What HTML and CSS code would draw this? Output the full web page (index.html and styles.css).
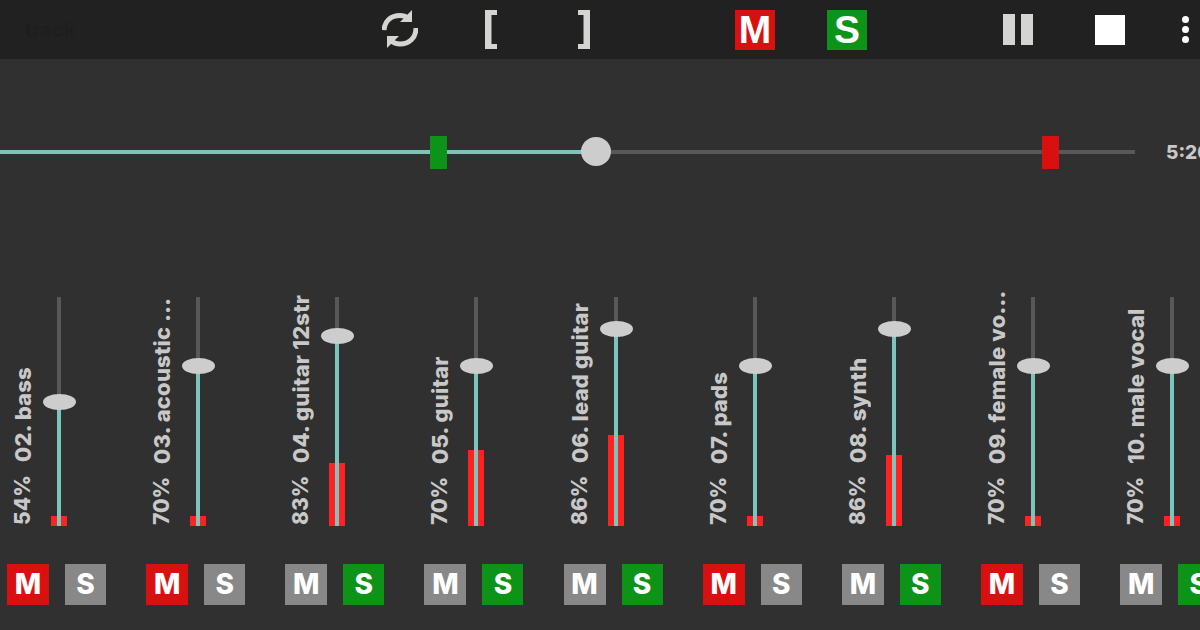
FILE: index.html
```html
<!DOCTYPE html>
<html lang="en">
<head>
    <meta charset="UTF-8">
    <meta name="viewport" content="width=device-width, initial-scale=1.0">
    <title>Multitrack Player</title>
    <link rel="stylesheet" href="styles.css">
</head>
<body>
    <header class="toolbar">
        <span class="song-title">track</span>
        <svg class="icon-sync" width="36" height="40" viewBox="0 0 36 40">
            <path class="sync-line" d="M2 20 C2.500 11 9 5.500 18 5.500 C21.500 5.500 24 6.500 26 8"/>
            <path class="sync-head" d="M30 0 V12 H18 Z"/>
            <path class="sync-line" d="M34 18 C34 28 27 34 18 34 C14.500 34 12 33 10 31.500"/>
            <path class="sync-head" d="M5 38 V26 H17 Z"/>
        </svg>
        <svg class="icon-loop-start" width="12" height="39" viewBox="0 0 12 39">
            <path d="M0 0 H12 V5 H6.500 V34 H12 V39 H0 Z"/>
        </svg>
        <svg class="icon-loop-end" width="12" height="39" viewBox="0 0 12 39">
            <path d="M12 0 H0 V5 H5.500 V34 H0 V39 H12 Z"/>
        </svg>
        <button class="top-btn mute">M</button>
        <button class="top-btn solo">S</button>
        <div class="pause"><span></span><span></span></div>
        <div class="stop"></div>
        <div class="more"><span></span><span></span><span></span></div>
    </header>

    <section class="seek-row">
        <div class="seek-track">
            <div class="seek-played"></div>
            <div class="seek-thumb"></div>
            <div class="marker marker-in"></div>
            <div class="marker marker-out"></div>
        </div>
        <span class="seek-time">5:20</span>
    </section>

    <section class="mixer">
        <div class="channel">
            <div class="strip">
                <div class="label"><span>54%</span><span>02. bass</span></div>
                <div class="fader">
                    <div class="meter" style="height: 10px"></div>
                    <div class="level" style="height: 54%"></div>
                    <div class="knob" style="bottom: 54%"></div>
                </div>
            </div>
            <div class="btns"><button class="btn mute">M</button><button class="btn">S</button></div>
        </div>
        <div class="channel">
            <div class="strip">
                <div class="label"><span>70%</span><span>03. acoustic ...</span></div>
                <div class="fader">
                    <div class="meter" style="height: 10px"></div>
                    <div class="level" style="height: 70%"></div>
                    <div class="knob" style="bottom: 70%"></div>
                </div>
            </div>
            <div class="btns"><button class="btn mute">M</button><button class="btn">S</button></div>
        </div>
        <div class="channel">
            <div class="strip">
                <div class="label"><span>83%</span><span>04. guitar 12str</span></div>
                <div class="fader">
                    <div class="meter" style="height: 63px"></div>
                    <div class="level" style="height: 83%"></div>
                    <div class="knob" style="bottom: 83%"></div>
                </div>
            </div>
            <div class="btns"><button class="btn">M</button><button class="btn solo">S</button></div>
        </div>
        <div class="channel">
            <div class="strip">
                <div class="label"><span>70%</span><span>05. guitar</span></div>
                <div class="fader">
                    <div class="meter" style="height: 76px"></div>
                    <div class="level" style="height: 70%"></div>
                    <div class="knob" style="bottom: 70%"></div>
                </div>
            </div>
            <div class="btns"><button class="btn">M</button><button class="btn solo">S</button></div>
        </div>
        <div class="channel">
            <div class="strip">
                <div class="label"><span>86%</span><span>06. lead guitar</span></div>
                <div class="fader">
                    <div class="meter" style="height: 91px"></div>
                    <div class="level" style="height: 86%"></div>
                    <div class="knob" style="bottom: 86%"></div>
                </div>
            </div>
            <div class="btns"><button class="btn">M</button><button class="btn solo">S</button></div>
        </div>
        <div class="channel">
            <div class="strip">
                <div class="label"><span>70%</span><span>07. pads</span></div>
                <div class="fader">
                    <div class="meter" style="height: 10px"></div>
                    <div class="level" style="height: 70%"></div>
                    <div class="knob" style="bottom: 70%"></div>
                </div>
            </div>
            <div class="btns"><button class="btn mute">M</button><button class="btn">S</button></div>
        </div>
        <div class="channel">
            <div class="strip">
                <div class="label"><span>86%</span><span>08. synth</span></div>
                <div class="fader">
                    <div class="meter" style="height: 71px"></div>
                    <div class="level" style="height: 86%"></div>
                    <div class="knob" style="bottom: 86%"></div>
                </div>
            </div>
            <div class="btns"><button class="btn">M</button><button class="btn solo">S</button></div>
        </div>
        <div class="channel">
            <div class="strip">
                <div class="label"><span>70%</span><span>09. female vo...</span></div>
                <div class="fader">
                    <div class="meter" style="height: 10px"></div>
                    <div class="level" style="height: 70%"></div>
                    <div class="knob" style="bottom: 70%"></div>
                </div>
            </div>
            <div class="btns"><button class="btn mute">M</button><button class="btn">S</button></div>
        </div>
        <div class="channel">
            <div class="strip">
                <div class="label"><span>70%</span><span>10. male vocal</span></div>
                <div class="fader">
                    <div class="meter" style="height: 10px"></div>
                    <div class="level" style="height: 70%"></div>
                    <div class="knob" style="bottom: 70%"></div>
                </div>
            </div>
            <div class="btns"><button class="btn">M</button><button class="btn solo">S</button></div>
        </div>
    </section>
</body>
</html>
```

FILE: styles.css
```css
html, body {
    margin: 0;
    height: 100%;
    overflow: hidden;
}
body {
    width: 1200px;
    height: 630px;
    background: #303030;
    font-family: 'Inter', 'Open Sans', sans-serif;
    color: #c8c8c8;
}
button {
    border: none;
    padding: 0;
    color: white;
}

/* top bar */
.toolbar {
    display: flex;
    align-items: center;
    height: 59px;
    background: #212121;
}
.song-title {
    flex: none;
    width: 357px;
    padding-left: 25px;
    font-size: 20px;
    font-weight: 700;
    color: #1e1e1e;
}
.sync-line {
    fill: none;
    stroke: #d4d4d2;
    stroke-width: 5;
}
.sync-head {
    fill: #d4d4d2;
}
.icon-loop-start {
    margin-left: 67px;
    fill: #d4d4d2;
}
.icon-loop-end {
    margin-left: 81px;
    fill: #d4d4d2;
}
.top-btn {
    width: 40px;
    height: 40px;
    font-family: 'Liberation Sans', Arial, sans-serif;
    font-size: 39px;
    font-weight: 700;
    line-height: 40px;
}
.top-btn.mute {
    margin-left: 145px;
}
.top-btn.solo {
    margin-left: 52px;
}
.mute {
    background: #d81010;
}
.solo {
    background: #0d9418;
}
.pause {
    display: flex;
    gap: 6px;
    margin-left: 136px;
}
.pause span {
    width: 12px;
    height: 31px;
    background: #d4d4d2;
}
.stop {
    width: 30px;
    height: 30px;
    margin-left: 62px;
    background: white;
}
.more {
    display: flex;
    flex-direction: column;
    gap: 3px;
    margin-left: 57px;
}
.more span {
    width: 7px;
    height: 7px;
    border-radius: 50%;
    background: white;
}

/* seek bar */
.seek-row {
    display: flex;
    align-items: center;
    height: 34px;
    margin-top: 76px;
    white-space: nowrap;
}
.seek-track {
    position: relative;
    flex: none;
    width: 1135px;
    height: 4px;
    background: #585858;
}
.seek-played {
    width: 596px;
    height: 4px;
    background: #7cc4bc;
}
.seek-thumb {
    position: absolute;
    left: 581px;
    top: -13px;
    width: 30px;
    height: 29px;
    border-radius: 50%;
    background: #cdcdcd;
}
.marker {
    position: absolute;
    top: -14px;
    width: 17px;
    height: 33px;
}
.marker-in {
    left: 430px;
    background: #0d9418;
}
.marker-out {
    left: 1042px;
    background: #d81010;
}
.seek-time {
    flex: none;
    margin-left: 31px;
    font-size: 19px;
    font-weight: 800;
}

/* mixer */
.mixer {
    display: flex;
    margin-top: 128px;
    margin-left: -10px;
}
.channel {
    flex: none;
    width: 139.15px;
}
.strip {
    display: flex;
    justify-content: space-between;
    box-sizing: border-box;
    width: 71px;
    height: 229px;
    padding-left: 21px;
}
.label {
    display: flex;
    gap: 13px;
    box-sizing: border-box;
    height: 229px;
    padding-top: 1px;
    writing-mode: vertical-rl;
    transform: rotate(180deg);
    font-size: 22px;
    font-weight: 800;
    letter-spacing: 0.2px;
    line-height: 24px;
    white-space: nowrap;
}
.label span:first-child {
    font-size: 21px;
    letter-spacing: 0;
}
.fader {
    position: relative;
    flex: none;
    width: 4px;
    height: 229px;
    background: #585858;
}
.level {
    position: absolute;
    left: 0;
    bottom: 0;
    width: 4px;
    background: #7cc4bc;
}
.meter {
    position: absolute;
    left: -6px;
    bottom: 0;
    width: 16px;
    background: #ff2222;
}
.knob {
    position: absolute;
    left: -14px;
    width: 33px;
    height: 16px;
    margin-bottom: -8px;
    border-radius: 50%;
    background: #cdcdcd;
}
.btns {
    display: flex;
    gap: 16px;
    margin-top: 38px;
    padding-left: 17px;
}
.btn {
    width: 41px;
    height: 41px;
    background: #888888;
    font-family: 'Inter', 'Open Sans', sans-serif;
    font-size: 28px;
    font-weight: 800;
    line-height: 41px;
}
.btn:first-child {
    width: 42px;
}
.btn.mute {
    background: #d81010;
}
.btn.solo {
    background: #0d9418;
}
```
